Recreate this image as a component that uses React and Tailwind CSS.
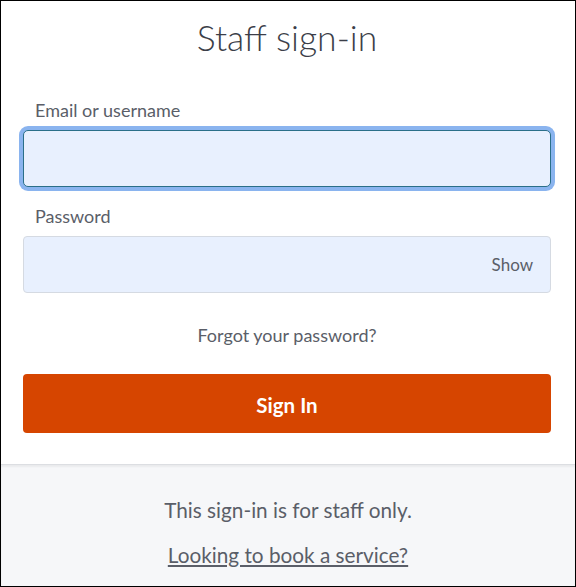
import React, { useState } from 'react';

const StaffSignIn = () => {
  const [showPassword, setShowPassword] = useState(false);

  return (
    <div
      className="flex h-[587px] w-[576px] flex-col border border-black bg-white text-[#5a5e68]"
      style={{ fontFamily: 'Lato, "Open Sans", sans-serif' }}
    >
      <div className="pl-[22px] pr-[24px] pt-[15px] pb-[31px]">
        <h1 className="text-center text-[35.5px] font-light leading-[44px] text-[#3b3e48]">Staff sign-in</h1>

        <label className="mt-[38px] block pl-[12px] text-[18px] leading-[24px]">Email or username</label>
        <input
          type="text"
          className="mt-[8px] block h-[57px] w-full rounded-[5px] border border-[#2a6f89] bg-[#e8f0fe] px-3 text-[17px] outline-none ring-4 ring-[#8ab4ef]"
        />

        <label className="mt-[17px] block pl-[12px] text-[18px] leading-[24px]">Password</label>
        <div className="mt-[8px] flex h-[57px] items-center rounded-[4px] border border-[#d5dae2] bg-[#e8f0fe]">
          <input
            type={showPassword ? 'text' : 'password'}
            className="h-full flex-1 bg-transparent px-3 text-[17px] outline-none"
          />
          <button
            type="button"
            onClick={() => setShowPassword(!showPassword)}
            className="pr-[17px] text-[17px] leading-[24px] text-[#5a5e68]"
          >
            Show
          </button>
        </div>

        <p className="mt-[30px] text-center text-[18px] leading-[24px]">Forgot your password?</p>

        <button
          type="button"
          className="mt-[27px] block h-[59px] w-full rounded-[4px] bg-[#d64500] pt-[3px] text-[20.5px] font-bold text-white"
        >
          Sign In
        </button>
      </div>

      <div className="flex-1 border-t border-[#dcdee2] bg-[#f6f7f9] pt-[31px] text-center text-[20.75px] leading-[28px] shadow-[inset_0_2px_2px_rgba(0,0,0,0.05)]">
        <p>This sign-in is for staff only.</p>
        <p className="mt-[17px]">
          <a href="#" className="underline">Looking to book a service?</a>
        </p>
      </div>
    </div>
  );
};

export default StaffSignIn;
